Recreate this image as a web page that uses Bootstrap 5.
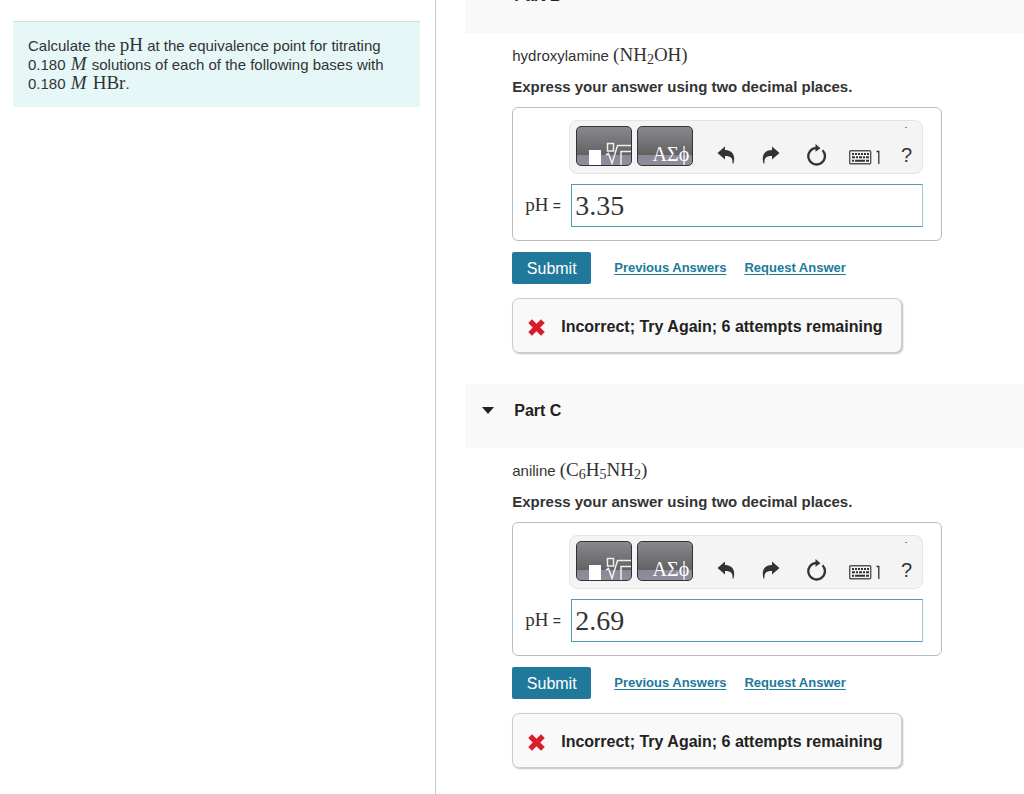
<!DOCTYPE html>
<html lang="en">
<head>
<meta charset="utf-8">
<meta name="viewport" content="width=device-width, initial-scale=1">
<title>Equivalence point pH</title>
<link href="https://cdn.jsdelivr.net/npm/bootstrap@5.3.0/dist/css/bootstrap.min.css" rel="stylesheet">
<style>
body{font-family:"Liberation Sans",Arial,sans-serif;font-size:15px;line-height:20px;color:#333;background:#fff}
.problem-pane{flex:0 0 42.6%;border-right:1px solid #bcc6d6;padding:21px 15px 0 13px}
.intro{background:#e6f7f8;border-top:1px solid #d5dfe2;padding:14px 15px;line-height:19px}
.chem{font-family:"Liberation Serif",serif;font-size:19px;line-height:16px;white-space:nowrap}
.intro i.chem{margin:0 1px}
.intro i.chem + .chem{margin-left:1px}
.chem sub{font-size:14px;bottom:-3px;line-height:1}
.answer-pane{min-width:0;padding-left:29px;overflow:hidden}
.parts-scroll{margin-top:-31px}
.part-head{background:#f9f9f9;height:64px;padding:17px 17px 0;color:#222}
.part-head h2{font-size:16px;line-height:20px;margin:0;font-weight:700}
.toggle{width:32px;height:18px;color:#222}
.toggle svg{display:block}
.part-body{padding:12px 16px 31px 47px}
.lead-line{line-height:22px}
.instruct{margin:10px 0;line-height:20px}
.answer-box{max-width:430px;height:134px;border:1px solid #bbb;border-radius:6px;padding:12px 18px 12px 12px}
.tools{height:54px;margin-left:44px;background:#f4f4f4;border:1px solid #e4e4e4;border-radius:8px;padding:5px 5px 5px 6px}
.tool-dark{width:56px;height:40px;border:1px solid #333;border-radius:5px;background:linear-gradient(#89888f 0,#626262 74%,#8a8896 75%,#908e9c 100%);overflow:hidden}
.tool-dark svg{display:block}
.tool-greek{font-family:"Liberation Serif",serif;font-size:20px;color:#fff;line-height:54px;text-align:right;padding:0 3px 0 0;margin-left:5px}
.tool-row{padding:17px 5px 0 21px}
.tool-plain{border:0;background:none;padding:0;color:#333;height:24px;flex:none}
.tool-plain svg{display:block}
.help-mark{font-size:20px;line-height:24px;position:relative}
.help-mark::before{content:"";position:absolute;left:4px;top:-16px;width:2px;height:1px;background:#888}
.field-row{margin-top:10px}
.ph-label{flex:0 0 46px;white-space:nowrap}
.ph-label small{font-size:14px}
.ph-field{border:1px solid #4f9db3;border-right-color:#9cc8d6;border-radius:0;height:43px;padding:0 3px;font-family:"Liberation Serif",serif;font-size:28px;line-height:40px;color:#333}
.submit-row{margin-top:11px}
.btn-submit{background:#20799b;color:#fff;border:0;border-radius:2px;width:79px;height:32px;font-size:16px;padding:1px 0 0}
.btn-submit:hover{background:#17627e;color:#fff}
.answer-links{font-size:13px;font-weight:700;gap:18px;margin-left:23px}
.answer-links a{color:#20799b;text-underline-offset:2px}
.feedback{width:390px;max-width:100%;height:55px;border:1px solid #ccc;border-radius:7px;background:#f9f9f9;box-shadow:1px 1px 2px #bbb;padding:3px 15px 0;margin-top:14px;font-size:16px;font-weight:700;color:#222;gap:16px}
</style>
</head>
<body>
<svg class="d-none" aria-hidden="true">
<symbol id="i-root" viewBox="0 0 54 38"><path fill="#fff" d="M12 23h12v15H12z"/><path fill="none" stroke="#eee" stroke-width="1.5" d="M30.5 16.5h6v7.5h-6zM29 28l2.500-1.500 3.500 10 5.500-18H55M44 38V24.500h11"/></symbol>
<symbol id="i-undo" viewBox="0 0 18 18"><path fill="currentColor" d="M.5 7 8 .5V4c7 0 11 5 8.500 13.500h-1C16 12 14 10 8 10v3.500z"/></symbol>
<symbol id="i-reset" viewBox="0 0 22 22"><path fill="none" stroke="currentColor" stroke-width="2.3" d="M17.5 6.300A8.300 8.300 0 1 1 11 3.900"/><path fill="currentColor" d="m10.500 0 5 4.200-5 3.600z"/></symbol>
<symbol id="i-keys" viewBox="0 0 32 19"><g transform="translate(1 4)"><rect x=".7" y=".7" width="21" height="13" rx="1" fill="none" stroke="#555" stroke-width="1.4"/><path stroke="currentColor" stroke-width="2" stroke-dasharray="2 1" d="M3 4h17"/><path stroke="currentColor" stroke-width="2" stroke-dasharray="3 1 2 1" d="M3 7.300h17"/><path stroke="currentColor" stroke-width="2" d="M3 10.800h2m1 0h10m1 0h3"/><path fill="none" stroke="currentColor" stroke-width="1.300" d="M27.500 1.500h2.300V14"/></g></symbol>
<symbol id="i-wrong" viewBox="0 0 16 16"><path fill="none" stroke="#d91e2b" stroke-width="5" stroke-linejoin="round" d="m2 2 12 12M14 2 2 14"/></symbol>
</svg>
<div class="d-flex vh-100 overflow-hidden">
<aside class="problem-pane">
<div class="intro">Calculate the <span class="chem">pH</span> at the equivalence point for titrating 0.180 <i class="chem">M</i> solutions of each of the following bases with 0.180 <i class="chem">M</i> <span class="chem">HBr</span>.</div>
</aside>
<main class="answer-pane flex-grow-1">
<div class="parts-scroll">
<section>
<header class="part-head d-flex"><button class="toggle border-0 bg-transparent p-0" type="button" aria-label="Collapse Part B"><svg width="12" height="7"><path fill="currentColor" d="M0 0h12L6 7z"/></svg></button><h2>Part B</h2></header>
<div class="part-body">
<div class="lead-line">hydroxylamine <span class="chem">(NH<sub>2</sub>OH)</span></div>
<p class="instruct fw-bold">Express your answer using two decimal places.</p>
<div class="answer-box">
<div class="tools d-flex">
<button class="tool-dark p-0" type="button" aria-label="Templates"><svg width="54" height="38"><use href="#i-root"/></svg></button>
<button class="tool-dark tool-greek" type="button">ΑΣϕ</button>
<div class="d-flex flex-grow-1 justify-content-between tool-row">
<button class="tool-plain" type="button" aria-label="Undo"><svg width="24" height="18"><use href="#i-undo"/></svg></button>
<button class="tool-plain" type="button" aria-label="Redo"><svg width="24" height="18"><use href="#i-undo" transform="matrix(-1 0 0 1 24 0)"/></svg></button>
<button class="tool-plain" type="button" aria-label="Reset"><svg width="22" height="22"><use href="#i-reset"/></svg></button>
<button class="tool-plain" type="button" aria-label="Keyboard shortcuts"><svg width="32" height="19"><use href="#i-keys"/></svg></button>
<button class="tool-plain help-mark" type="button">?</button>
</div>
</div>
<div class="d-flex align-items-center field-row"><label class="ph-label" for="phB"><span class="chem">pH</span> <small>=</small></label><input class="form-control ph-field" id="phB" type="text" value="3.35"></div>
</div>
<div class="d-flex align-items-center submit-row"><button class="btn btn-submit" type="button">Submit</button><nav class="answer-links d-flex"><a href="#">Previous Answers</a><a href="#">Request Answer</a></nav></div>
<div class="feedback d-flex align-items-center" role="status"><svg width="17" height="17"><use href="#i-wrong"/></svg><span>Incorrect; Try Again; 6 attempts remaining</span></div>
</div>
</section>
<section>
<header class="part-head d-flex"><button class="toggle border-0 bg-transparent p-0" type="button" aria-label="Collapse Part C"><svg width="12" height="7"><path fill="currentColor" d="M0 0h12L6 7z"/></svg></button><h2>Part C</h2></header>
<div class="part-body">
<div class="lead-line">aniline <span class="chem">(C<sub>6</sub>H<sub>5</sub>NH<sub>2</sub>)</span></div>
<p class="instruct fw-bold">Express your answer using two decimal places.</p>
<div class="answer-box">
<div class="tools d-flex">
<button class="tool-dark p-0" type="button" aria-label="Templates"><svg width="54" height="38"><use href="#i-root"/></svg></button>
<button class="tool-dark tool-greek" type="button">ΑΣϕ</button>
<div class="d-flex flex-grow-1 justify-content-between tool-row">
<button class="tool-plain" type="button" aria-label="Undo"><svg width="24" height="18"><use href="#i-undo"/></svg></button>
<button class="tool-plain" type="button" aria-label="Redo"><svg width="24" height="18"><use href="#i-undo" transform="matrix(-1 0 0 1 24 0)"/></svg></button>
<button class="tool-plain" type="button" aria-label="Reset"><svg width="22" height="22"><use href="#i-reset"/></svg></button>
<button class="tool-plain" type="button" aria-label="Keyboard shortcuts"><svg width="32" height="19"><use href="#i-keys"/></svg></button>
<button class="tool-plain help-mark" type="button">?</button>
</div>
</div>
<div class="d-flex align-items-center field-row"><label class="ph-label" for="phC"><span class="chem">pH</span> <small>=</small></label><input class="form-control ph-field" id="phC" type="text" value="2.69"></div>
</div>
<div class="d-flex align-items-center submit-row"><button class="btn btn-submit" type="button">Submit</button><nav class="answer-links d-flex"><a href="#">Previous Answers</a><a href="#">Request Answer</a></nav></div>
<div class="feedback d-flex align-items-center" role="status"><svg width="17" height="17"><use href="#i-wrong"/></svg><span>Incorrect; Try Again; 6 attempts remaining</span></div>
</div>
</section>
</div>
</main>
</div>
<script src="https://cdn.jsdelivr.net/npm/bootstrap@5.3.0/dist/js/bootstrap.bundle.min.js"></script>
</body>
</html>
